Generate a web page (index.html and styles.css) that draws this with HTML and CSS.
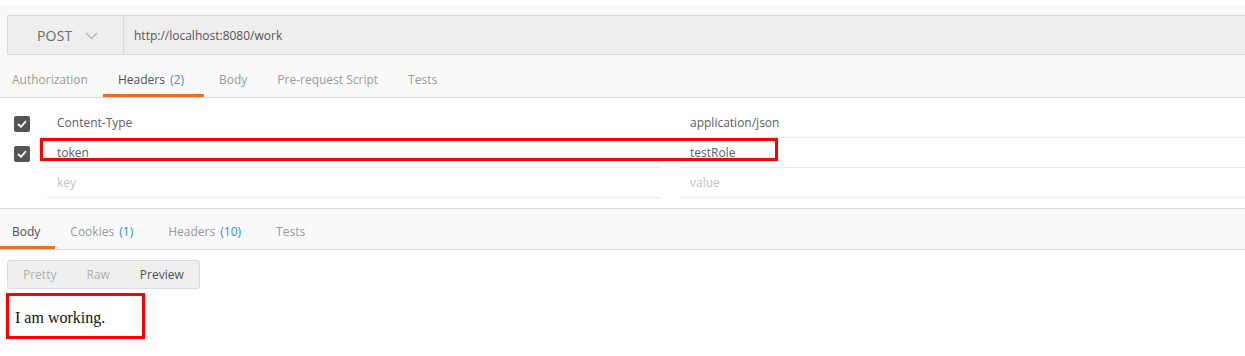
FILE: index.html
```html
<!DOCTYPE html>
<html>
<head>
<meta charset="utf-8">
<link rel="stylesheet" href="styles.css">
</head>
<body>
<div class="page">
  <div class="top-gap"></div>
  <section class="request">
    <div class="urlbar">
      <div class="method">
        <span class="method-name">POST</span>
        <svg class="chevron" width="13" height="8" viewBox="0 0 13 8"><path d="M1 1 L6.5 6.5 L12 1" fill="none" stroke="#b4b4b4" stroke-width="1.3"/></svg>
      </div>
      <div class="url">http://localhost:8080/work</div>
    </div>
    <nav class="tabs">
      <span class="tab tab--first">Authorization</span>
      <span class="tab tab--active tab--count">Headers <span class="count">(2)</span></span>
      <span class="tab">Body</span>
      <span class="tab">Pre-request Script</span>
      <span class="tab">Tests</span>
    </nav>
  </section>

  <section class="headers">
    <div class="hrow hrow--full">
      <div class="check-cell"><span class="checkbox"><svg width="10" height="8" viewBox="0 0 10 8"><path d="M1 4 L4 6.8 L9 1.2" fill="none" stroke="#fff" stroke-width="1.8"/></svg></span></div>
      <div class="cell cell-key">Content-Type</div>
      <div class="cell cell-val">application/json</div>
    </div>
    <div class="hrow">
      <div class="check-cell"><span class="checkbox"><svg width="10" height="8" viewBox="0 0 10 8"><path d="M1 4 L4 6.8 L9 1.2" fill="none" stroke="#fff" stroke-width="1.8"/></svg></span></div>
      <div class="cell cell-key">token</div>
      <div class="cell cell-val">testRole</div>
      <div class="mark mark--header"></div>
    </div>
    <div class="hrow">
      <div class="check-cell"></div>
      <div class="cell cell-key placeholder">key</div>
      <div class="cell cell-val placeholder">value</div>
    </div>
  </section>

  <section class="response">
    <nav class="tabs tabs--response">
      <span class="tab tab--first tab--active">Body</span>
      <span class="tab tab--count">Cookies <span class="count">(1)</span></span>
      <span class="tab tab--count">Headers <span class="count">(10)</span></span>
      <span class="tab">Tests</span>
    </nav>
    <div class="viewbar">
      <div class="segmented">
        <span class="seg">Pretty</span>
        <span class="seg">Raw</span>
        <span class="seg seg--active">Preview</span>
      </div>
    </div>
    <div class="preview">I am working.</div>
  </section>
</div>
</body>
</html>
```

FILE: styles.css
```css
* { box-sizing: border-box; }
html, body { margin: 0; padding: 0; background: #fff; }
body {
  font-family: "Open Sans", "Noto Sans", Arial, sans-serif;
  font-size: 12px;
  color: #505050;
  width: 1245px;
  height: 356px;
  overflow: hidden;
}

.top-gap { height: 5px; background: #fff; }

.request {
  background: #f8f8f8;
  padding-top: 10px;
}

.urlbar {
  margin-left: 7px;
  height: 40px;
  display: flex;
  background: #eeeeee;
  border: 1px solid #d9d9d9;
  border-right: none;
  border-radius: 2px 0 0 2px;
}

.method {
  width: 116px;
  border-right: 1px solid #d9d9d9;
  display: flex;
  align-items: center;
  padding-left: 29px;
  gap: 12px;
}
.method-name {
  font-size: 14px;
  color: #6b6b6b;
  letter-spacing: 0.2px;
}
.chevron { margin-top: 1px; }

.url {
  display: flex;
  align-items: center;
  padding-left: 10px;
  font-size: 12px;
  color: #555;
}

.tabs {
  height: 43px;
  display: flex;
  align-items: stretch;
  background: #f9f9f9;
  border-bottom: 1px solid #dcdcdc;
}
.tab {
  display: flex;
  align-items: center;
  padding: 9px 15px 0;
  color: #9a9a9a;
  border-bottom: 3px solid transparent;
  white-space: pre;
}
.tab--first { padding-left: 12px; }
.tab--count { padding-right: 20px; }
.tab--active {
  color: #505050;
  border-bottom-color: #f26b21;
}
.count { color: #2f8ef0; margin-left: 2px; }

.headers {
  padding: 10px 0 10px;
  border-bottom: 1px solid #dcdcdc;
}
.hrow {
  position: relative;
  height: 30px;
  display: grid;
  grid-template-columns: 47px 613px 1fr;
}
.check-cell {
  display: flex;
  align-items: center;
  padding-left: 14px;
}
.checkbox {
  width: 16px;
  height: 16px;
  border-radius: 2px;
  background: #555;
  display: flex;
  align-items: center;
  justify-content: center;
  margin-top: 1px;
}
.cell {
  display: flex;
  align-items: center;
  padding-left: 10px;
  border-bottom: 1px solid #ececec;
  color: #606060;
}
.cell-val { margin-left: 20px; }
.hrow--full .cell-val { margin-left: 0; padding-left: 30px; }
.placeholder { color: #c2c2c2; }

.mark {
  position: absolute;
  border: 3px solid #ff0000;
}
.mark--header {
  left: 40px;
  top: 0;
  width: 738px;
  height: 23px;
}

.tabs--response {
  height: 41px;
}
.tabs--response .tab { padding-top: 8px; }

.viewbar { padding: 10px 0 0 7px; }
.segmented {
  display: inline-flex;
  width: 193px;
  height: 29px;
  background: #efefef;
  border: 1px solid #dadada;
  border-radius: 3px;
}
.seg {
  display: flex;
  align-items: center;
  padding: 0 15px;
  color: #b0b0b0;
}
.seg--active { color: #505050; }

.preview {
  margin: 4px 0 0 6px;
  width: 139px;
  height: 46px;
  border: 3px solid #ff0000;
  padding: 13px 0 0 6px;
  font-family: "Liberation Serif", "Times New Roman", serif;
  font-size: 16px;
  color: #111;
  line-height: 18px;
}
```
